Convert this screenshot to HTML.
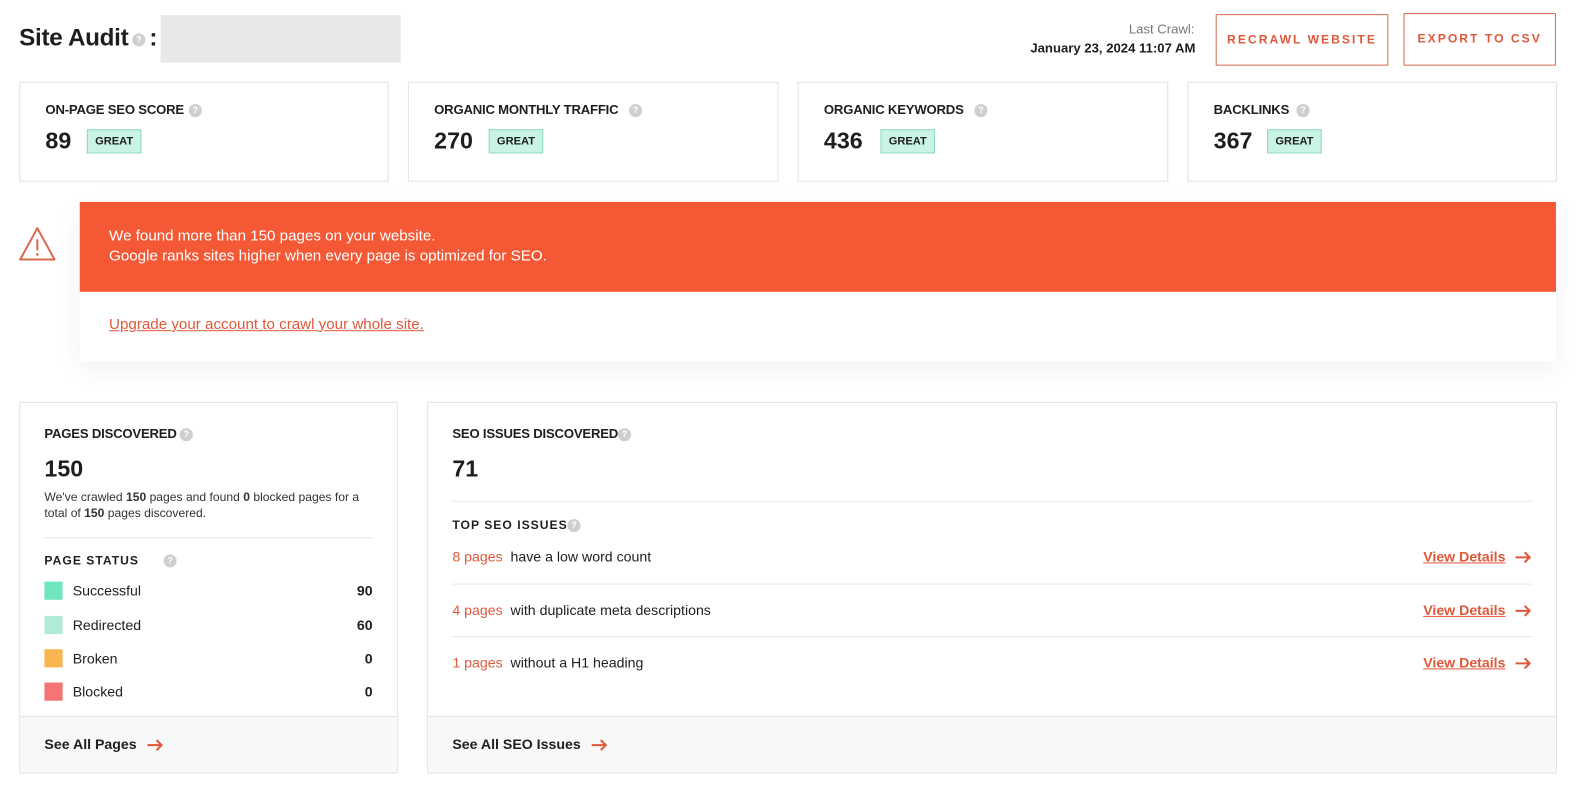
<!DOCTYPE html>
<html style="overflow:hidden"><head><meta charset="utf-8"><style>
*{margin:0;padding:0;box-sizing:border-box}
html,body{width:1583px;height:793px;overflow:hidden}
body{background:#fff;font-family:"Liberation Sans",sans-serif;color:#1e1e1e;position:relative}
#w{position:absolute;left:0;top:0;width:1583px;height:793px;transform:scale(1.0097);transform-origin:0 0;overflow:hidden}
.a{position:absolute}
.q{position:absolute;width:13px;height:13px;border-radius:50%;background:#cfcfcf;color:#fff;font-size:9px;font-weight:bold;text-align:center;line-height:13px}
.card{position:absolute;border:1px solid #e3e3e3;background:#fff}
.ct{position:absolute;left:25px;top:19px;font-size:13px;font-weight:bold;letter-spacing:-0.2px}
.cn{position:absolute;left:25px;top:44px;font-size:23px;font-weight:bold}
.badge{position:absolute;top:46px;height:24px;width:54px;background:#c9f4e4;border:1px solid #8fd9bd;font-size:11px;font-weight:bold;text-align:center;line-height:22px}
.btn{position:absolute;border:1.5px solid #d8694f;color:#e0583a;font-size:12px;font-weight:bold;letter-spacing:2px;text-align:center}
.lnk{color:#e0583a}
.sq{position:absolute;left:24px;width:18px;height:18px}
.row{position:absolute;left:24px;right:24px;font-size:14px}
.arr{display:inline-block;vertical-align:middle}
</style></head><body><div id="w">
<div class="a" style="left:19px;top:24px;font-size:24px;font-weight:bold;letter-spacing:-0.3px">Site Audit</div>
<div class="q" style="left:131px;top:33px">?</div>
<div class="a" style="left:148px;top:24px;font-size:24px;font-weight:bold">:</div>
<div class="a" style="left:159px;top:15px;width:238px;height:47px;background:#e8e8e8"></div>
<div class="a" style="right:400px;top:21px;font-size:13px;color:#777">Last Crawl:</div>
<div class="a" style="right:399px;top:40px;font-size:13px;font-weight:bold">January 23, 2024 11:07 AM</div>
<div class="btn" style="left:1204px;top:14px;width:171px;height:51px;line-height:48px">RECRAWL WEBSITE</div>
<div class="btn" style="left:1390px;top:13px;width:151px;height:52px;line-height:49px">EXPORT TO CSV</div>

<div class="card" style="left:19px;top:81px;width:366px;height:99px"><div class="ct">ON-PAGE SEO SCORE</div><div class="q" style="left:167px;top:21px">?</div><div class="cn">89</div><div class="badge" style="left:66px">GREAT</div></div>
<div class="card" style="left:404px;top:81px;width:367px;height:99px"><div class="ct">ORGANIC MONTHLY TRAFFIC</div><div class="q" style="left:218px;top:21px">?</div><div class="cn">270</div><div class="badge" style="left:79px">GREAT</div></div>
<div class="card" style="left:790px;top:81px;width:367px;height:99px"><div class="ct">ORGANIC KEYWORDS</div><div class="q" style="left:174px;top:21px">?</div><div class="cn">436</div><div class="badge" style="left:81px">GREAT</div></div>
<div class="card" style="left:1176px;top:81px;width:366px;height:99px"><div class="ct">BACKLINKS</div><div class="q" style="left:107px;top:21px">?</div><div class="cn">367</div><div class="badge" style="left:78px">GREAT</div></div>

<svg class="a" style="left:18px;top:224px" width="38" height="36" viewBox="0 0 38 36"><path d="M19 2 L36 33 L2 33 Z" fill="none" stroke="#d9694f" stroke-width="2" stroke-linejoin="round"/><path d="M19 13 V24" stroke="#d9694f" stroke-width="2"/><circle cx="19" cy="28" r="1.3" fill="#d9694f"/></svg>
<div class="a" style="left:79px;top:200px;width:1462px;height:158px;background:#fff;box-shadow:0 8px 24px rgba(0,0,0,0.06)"></div>
<div class="a" style="left:79px;top:200px;width:1462px;height:89px;background:#f45834"></div>
<div class="a" style="left:108px;top:224px;font-size:15px;color:#fff;line-height:20px">We found more than 150 pages on your website.<br>Google ranks sites higher when every page is optimized for SEO.</div>
<div class="a lnk" style="left:108px;top:313px;font-size:15px;text-decoration:underline">Upgrade your account to crawl your whole site.</div>

<div class="card" style="left:19px;top:398px;width:375px;height:368px">
<div class="ct" style="left:24px;top:23px">PAGES DISCOVERED</div><div class="q" style="left:158px;top:25px">?</div>
<div class="cn" style="left:24px;top:52px">150</div>
<div class="a" style="left:24px;top:85px;font-size:12px;line-height:16px;color:#333">We've crawled <b>150</b> pages and found <b>0</b> blocked pages for a<br>total of <b>150</b> pages discovered.</div>
<div class="a" style="left:24px;right:24px;top:133px;border-top:1px solid #e5e5e5"></div>
<div class="a" style="left:24px;top:149px;font-size:12px;font-weight:bold;letter-spacing:1px">PAGE STATUS</div><div class="q" style="left:142px;top:150px">?</div>
<div class="sq" style="top:177px;background:#6fe6bd"></div><div class="row" style="top:178px;padding-left:28px">Successful<b style="float:right">90</b></div>
<div class="sq" style="top:211px;background:#b3ead6"></div><div class="row" style="top:212px;padding-left:28px">Redirected<b style="float:right">60</b></div>
<div class="sq" style="top:244px;background:#f8b550"></div><div class="row" style="top:245px;padding-left:28px">Broken<b style="float:right">0</b></div>
<div class="sq" style="top:277px;background:#f77474"></div><div class="row" style="top:278px;padding-left:28px">Blocked<b style="float:right">0</b></div>
<div class="a" style="left:0;right:0;top:310px;bottom:0;background:#f7f8f8;border-top:1px solid #e3e3e3"></div>
<div class="a" style="left:24px;top:330px;font-size:14px;font-weight:bold">See All Pages <svg class="arr" style="margin-left:6px" width="17" height="12" viewBox="0 0 17 12"><path d="M1 6H15M10 1L15 6L10 11" fill="none" stroke="#e0583a" stroke-width="2"/></svg></div>
</div>

<div class="card" style="left:423px;top:398px;width:1119px;height:368px">
<div class="ct" style="left:24px;top:23px">SEO ISSUES DISCOVERED</div><div class="q" style="left:188px;top:25px">?</div>
<div class="cn" style="left:24px;top:52px">71</div>
<div class="a" style="left:24px;right:24px;top:97px;border-top:1px solid #e5e5e5"></div>
<div class="a" style="left:24px;top:114px;font-size:12px;font-weight:bold;letter-spacing:1px">TOP SEO ISSUES</div><div class="q" style="left:138px;top:115px">?</div>
<div class="row" style="top:144px"><span class="lnk">8 pages</span>&nbsp; have a low word count<span style="float:right"><span class="lnk" style="text-decoration:underline;font-weight:bold">View Details</span><svg class="arr" style="margin-left:9px" width="17" height="12" viewBox="0 0 17 12"><path d="M1 6H15M10 1L15 6L10 11" fill="none" stroke="#e0583a" stroke-width="2"/></svg></span></div>
<div class="a" style="left:24px;right:24px;top:179px;border-top:1px solid #e5e5e5"></div>
<div class="row" style="top:197px"><span class="lnk">4 pages</span>&nbsp; with duplicate meta descriptions<span style="float:right"><span class="lnk" style="text-decoration:underline;font-weight:bold">View Details</span><svg class="arr" style="margin-left:9px" width="17" height="12" viewBox="0 0 17 12"><path d="M1 6H15M10 1L15 6L10 11" fill="none" stroke="#e0583a" stroke-width="2"/></svg></span></div>
<div class="a" style="left:24px;right:24px;top:231px;border-top:1px solid #e5e5e5"></div>
<div class="row" style="top:249px"><span class="lnk">1 pages</span>&nbsp; without a H1 heading<span style="float:right"><span class="lnk" style="text-decoration:underline;font-weight:bold">View Details</span><svg class="arr" style="margin-left:9px" width="17" height="12" viewBox="0 0 17 12"><path d="M1 6H15M10 1L15 6L10 11" fill="none" stroke="#e0583a" stroke-width="2"/></svg></span></div>
<div class="a" style="left:0;right:0;top:310px;bottom:0;background:#f7f8f8;border-top:1px solid #e3e3e3"></div>
<div class="a" style="left:24px;top:330px;font-size:14px;font-weight:bold">See All SEO Issues <svg class="arr" style="margin-left:6px" width="17" height="12" viewBox="0 0 17 12"><path d="M1 6H15M10 1L15 6L10 11" fill="none" stroke="#e0583a" stroke-width="2"/></svg></div>
</div>
</div></body></html>
